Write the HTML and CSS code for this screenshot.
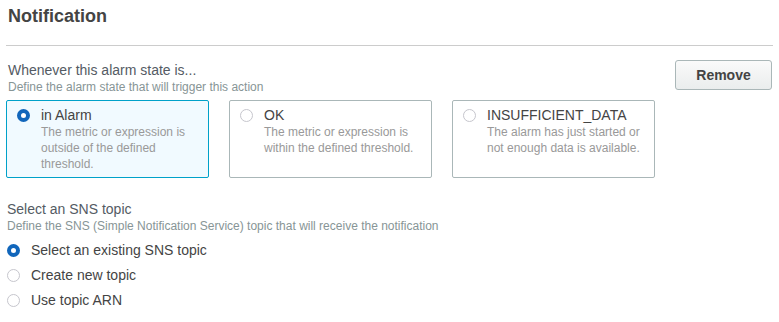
FILE: index.html
```html
<!DOCTYPE html>
<html lang="en">
<head>
    <meta charset="UTF-8">
    <title>Notification</title>
    <link rel="stylesheet" href="styles.css">
</head>
<body>

<div class="panel">
    <h2 class="title">Notification</h2>
    <hr class="divider">

    <div class="state-head">
        <div>
            <div class="field-label">Whenever this alarm state is...</div>
            <div class="field-desc">Define the alarm state that will trigger this action</div>
        </div>
        <button class="btn">Remove</button>
    </div>

    <div class="tiles">
        <div class="tile selected">
            <span class="radio on"></span>
            <div>
                <div class="tile-name">in Alarm</div>
                <div class="tile-desc">The metric or expression is outside of the defined threshold.</div>
            </div>
        </div>
        <div class="tile">
            <span class="radio"></span>
            <div>
                <div class="tile-name">OK</div>
                <div class="tile-desc">The metric or expression is within the defined threshold.</div>
            </div>
        </div>
        <div class="tile">
            <span class="radio"></span>
            <div>
                <div class="tile-name">INSUFFICIENT_DATA</div>
                <div class="tile-desc">The alarm has just started or not enough data is available.</div>
            </div>
        </div>
    </div>

    <div class="topic">
        <div class="field-label">Select an SNS topic</div>
        <div class="field-desc">Define the SNS (Simple Notification Service) topic that will receive the notification</div>
        <div class="option"><span class="radio on"></span>Select an existing SNS topic</div>
        <div class="option"><span class="radio"></span>Create new topic</div>
        <div class="option"><span class="radio"></span>Use topic ARN</div>
    </div>
</div>

</body>
</html>
```

FILE: styles.css
```css
body {
    margin: 0;
    font-family: "Liberation Sans", Arial, sans-serif;
    color: #444;
    background: #fff;
}
.panel {
    padding: 0 6px;
}
.title {
    margin: 0;
    padding: 5px 2px 0;
    font-size: 18px;
    line-height: 22px;
    font-weight: bold;
    color: #444;
}
.divider {
    margin: 18px 0 0;
    border: 0;
    border-top: 1px solid #cccccc;
}
.state-head {
    display: flex;
    justify-content: space-between;
    align-items: flex-start;
    margin-top: 15px;
    padding-left: 2px;
}
.field-label {
    font-size: 14px;
    line-height: 18px;
    color: #545b64;
}
.field-desc {
    font-size: 12px;
    line-height: 16px;
    color: #879596;
}
.btn {
    width: 97px;
    height: 30px;
    margin: -1px 1px 0 0;
    border: 1px solid #aab7b8;
    border-radius: 3px;
    background: linear-gradient(#fafafa, #eaeded);
    font-family: "Liberation Sans", Arial, sans-serif;
    font-size: 14px;
    font-weight: bold;
    color: #444;
    cursor: pointer;
}
.tiles {
    display: flex;
    gap: 20px;
    margin-top: 5px;
}
.tile {
    display: flex;
    align-items: flex-start;
    gap: 11px;
    box-sizing: border-box;
    width: 203px;
    height: 78px;
    padding: 5px 10px 0;
    border: 1px solid #aab7b8;
    border-radius: 2px;
}
.tile.selected {
    border-color: #00a1c9;
    background: #f1faff;
}
.tile .radio {
    margin-top: 3px;
}
.tile-name {
    font-size: 14px;
    line-height: 18px;
    color: #444;
}
.tile-desc {
    font-size: 12px;
    line-height: 16px;
    color: #999;
    padding-right: 2px;
}
.radio {
    flex: none;
    display: inline-block;
    box-sizing: border-box;
    width: 13px;
    height: 13px;
    border: 1px solid #c6c6cd;
    border-radius: 50%;
    background: #fff;
}
.radio.on {
    border: 4px solid #1166bb;
}
.topic {
    margin-top: 22px;
    padding-left: 1px;
}
.option {
    display: flex;
    align-items: center;
    gap: 11px;
    margin-top: 7px;
    font-size: 14px;
    line-height: 18px;
    color: #444;
}
```
